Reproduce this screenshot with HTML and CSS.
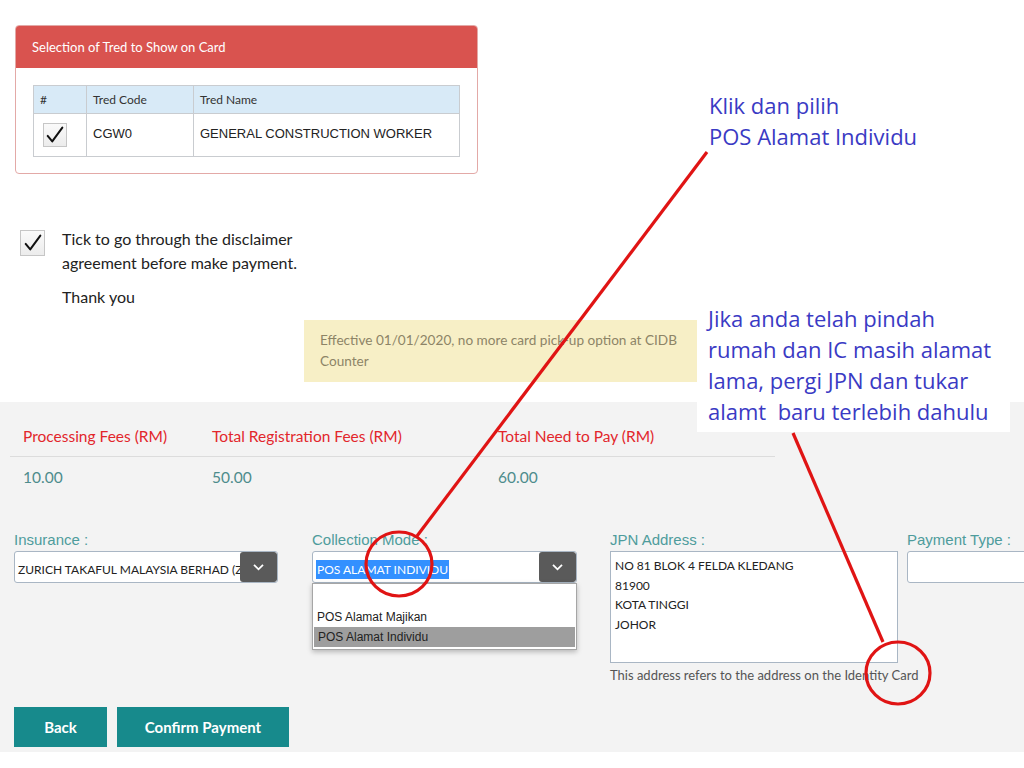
FILE: index.html
```html
<!DOCTYPE html>
<html lang="ms">
<head>
<meta charset="UTF-8" />
<title>Pembayaran Kad</title>
<link rel="stylesheet" href="styles.css">
</head>
<body>

<div class="page">

  <section class="top">
    <div class="panel">
      <div class="panel-head">Selection of Tred to Show on Card</div>
      <div class="panel-body">
        <table class="tred-table">
          <thead>
            <tr><th class="col-no">#</th><th class="col-code">Tred Code</th><th>Tred Name</th></tr>
          </thead>
          <tbody>
            <tr>
              <td class="col-no">
                <span class="tick">
                  <svg viewBox="0 0 24 24" width="22" height="22"><path d="M4 13 L9 19 L20 4" fill="none" stroke="#111" stroke-width="2.2" stroke-linecap="round" stroke-linejoin="round"/></svg>
                </span>
              </td>
              <td>CGW0</td>
              <td>GENERAL CONSTRUCTION WORKER</td>
            </tr>
          </tbody>
        </table>
      </div>
    </div>

    <div class="disclaimer">
      <span class="tick">
        <svg viewBox="0 0 24 24" width="22" height="22"><path d="M4 13 L9 19 L20 4" fill="none" stroke="#111" stroke-width="2.2" stroke-linecap="round" stroke-linejoin="round"/></svg>
      </span>
      <div class="disclaimer-text">
        <p>Tick to go through the disclaimer<br>agreement before make payment.</p>
        <p class="thanks">Thank you</p>
      </div>
    </div>

    <div class="notice">Effective 01/01/2020, no more card pick-up option at CIDB Counter</div>
  </section>

  <section class="pay">
    <div class="fees">
      <div class="fee-label">Processing Fees (RM)</div>
      <div class="fee-label">Total Registration Fees (RM)</div>
      <div class="fee-label">Total Need to Pay (RM)</div>
      <div class="fee-value">10.00</div>
      <div class="fee-value">50.00</div>
      <div class="fee-value">60.00</div>
    </div>

    <div class="form-row">
      <div class="field">
        <label>Insurance :</label>
        <div class="select w-insurance">
          <span class="select-text">ZURICH TAKAFUL MALAYSIA BERHAD (ZURICH)</span>
          <span class="select-btn">
            <svg viewBox="0 0 14 10" width="13" height="9"><path d="M2 2 L7 7 L12 2" fill="none" stroke="#fff" stroke-width="2"/></svg>
          </span>
        </div>
      </div>

      <div class="field">
        <label>Collection Mode :</label>
        <div class="select w-collect">
          <span class="select-text"><span class="picked">POS ALAMAT INDIVIDU</span></span>
          <span class="select-btn">
            <svg viewBox="0 0 14 10" width="13" height="9"><path d="M2 2 L7 7 L12 2" fill="none" stroke="#fff" stroke-width="2"/></svg>
          </span>
        </div>
        <ul class="options">
          <li>&nbsp;</li>
          <li>POS Alamat Majikan</li>
          <li class="hover">POS Alamat Individu</li>
        </ul>
      </div>

      <div class="field">
        <label>JPN Address :</label>
        <div class="address">NO 81 BLOK 4 FELDA KLEDANG<br>81900<br>KOTA TINGGI<br>JOHOR</div>
        <p class="note">This address refers to the address on the Identity Card</p>
      </div>

      <div class="field">
        <label>Payment Type :</label>
        <div class="select w-type"></div>
      </div>
    </div>

    <div class="actions">
      <button class="btn">Back</button>
      <button class="btn btn-wide">Confirm Payment</button>
    </div>
  </section>

  <!-- panduan di atas borang -->
  <div class="hint hint-pick">Klik dan pilih<br>POS Alamat Individu</div>
  <div class="hint hint-move">Jika anda telah pindah<br>rumah dan IC masih alamat<br>lama, pergi JPN dan tukar<br>alamt&nbsp; baru terlebih dahulu</div>

  <svg class="marks" width="1024" height="768" viewBox="0 0 1024 768">
    <g fill="none" stroke="#e01414" stroke-width="3.2">
      <line x1="707" y1="152" x2="417" y2="536"/>
      <ellipse cx="399" cy="564" rx="33" ry="32"/>
      <line x1="793" y1="433" x2="883" y2="642"/>
      <ellipse cx="898" cy="673" rx="32" ry="31"/>
    </g>
  </svg>

</div>

</body>
</html>
```

FILE: styles.css
```css
body {
  margin: 0;
  background: #fff;
  font-family: "Liberation Sans", Arial, sans-serif;
  color: #333;
  overflow: hidden;
}
.page {
  position: relative;
  width: 1024px;
  height: 768px;
  overflow: hidden;
}

/* bahagian atas */
.top {
  height: 402px;
  padding: 25px 0 0 15px;
  box-sizing: border-box;
}
.panel {
  width: 463px;
  border: 1px solid #e3a9a7;
  border-radius: 4px;
  box-sizing: border-box;
  overflow: hidden;
}
.panel-head {
  background: #d9534f;
  color: #fff;
  font-family: Lato, sans-serif;
  font-size: 13px;
  height: 42px;
  line-height: 42px;
  padding-left: 16px;
}
.panel-body {
  padding: 17px 17px 16px 17px;
}
.tred-table {
  width: 427px;
  border-collapse: collapse;
  font-size: 13px;
}
.tred-table th,
.tred-table td {
  border: 1px solid #c9ccd0;
  text-align: left;
  padding: 0 6px;
}
.tred-table th {
  background: #d8eaf7;
  font-family: Lato, sans-serif;
  font-weight: normal;
  font-size: 12px;
  height: 27px;
}
.tred-table td {
  height: 39px;
  color: #222;
  padding-bottom: 3px;
}
.col-no { width: 40px; }
.col-code { width: 94px; }

.tick {
  display: inline-flex;
  align-items: center;
  justify-content: center;
  width: 24px;
  height: 24px;
  border: 1px solid #c6c6c6;
  background: linear-gradient(#fafafa, #ececec);
  box-sizing: border-box;
}
.tred-table .tick { margin-left: 3px; margin-top: 4px; }

.disclaimer {
  display: flex;
  gap: 17px;
  margin: 53px 0 0 5px;
  font-family: Lato, sans-serif;
  font-size: 16px;
  color: #222;
}
.disclaimer .tick {
  width: 25px;
  height: 26px;
  margin-top: 3px;
}
.disclaimer-text p {
  margin: 0;
  line-height: 24px;
}
.disclaimer-text .thanks {
  margin-top: 10px;
}

.notice {
  margin: 11px 0 0 289px;
  width: 396px;
  height: 62px;
  box-sizing: border-box;
  padding: 10px 4px 10px 16px;
  background: #f7efc6;
  color: #8d8466;
  font-family: Lato, sans-serif;
  font-size: 13.6px;
  line-height: 21px;
}

/* bahagian bayaran */
.pay {
  background: #f3f3f3;
  height: 350px;
  padding-top: 24px;
  box-sizing: border-box;
}
.fees {
  display: grid;
  grid-template-columns: 189px 286px 290px;
  margin-left: 10px;
  width: 765px;
  font-family: Lato, sans-serif;
  font-size: 15.5px;
}
.fee-label {
  color: #e2262b;
  line-height: 20px;
  padding: 0 0 10px 13px;
  border-bottom: 1px solid #dcdcdc;
}
.fee-value {
  color: #4d8c8c;
  line-height: 20px;
  padding: 10px 0 0 13px;
}

.form-row {
  display: grid;
  grid-template-columns: 298px 298px 297px 1fr;
  padding-left: 14px;
  margin-top: 44px;
}
.field {
  position: relative;
}
.field label {
  display: block;
  color: #4e9c9c;
  font-size: 15px;
  line-height: 18px;
  height: 20px;
}
.select {
  display: flex;
  height: 32px;
  background: #fff;
  border: 1px solid #a9b6c4;
  border-radius: 3px;
  box-sizing: border-box;
  overflow: hidden;
}
.w-insurance { width: 264px; }
.w-collect { width: 265px; }
.w-type { width: 140px; }
.select-text {
  flex: 1;
  white-space: nowrap;
  overflow: hidden;
  font-family: Lato, sans-serif;
  font-size: 12px;
  line-height: 30px;
  padding: 3px 0 0 3px;
  color: #222;
}
.picked {
  background: #3390ff;
  color: #fff;
  padding: 2px 1px;
}
.select-btn {
  width: 37px;
  background: #5a5a5a;
  display: flex;
  align-items: center;
  justify-content: center;
  border-radius: 3px;
}
.options {
  position: absolute;
  left: 0;
  top: 52px;
  width: 265px;
  margin: 0;
  padding: 3px 0 2px;
  list-style: none;
  background: #fff;
  border: 1px solid #a6a6a6;
  box-sizing: border-box;
  box-shadow: 0 2px 5px rgb(0 0 0 / 0.25);
  font-size: 12px;
}
.options li {
  line-height: 20px;
  padding-left: 4px;
  color: #222;
}
.options li.hover {
  background: #9e9e9e;
  margin: 0 1px;
}

.address {
  width: 288px;
  height: 112px;
  background: #fff;
  border: 1px solid #a9b6c4;
  box-sizing: border-box;
  padding: 4px 4px;
  font-family: Lato, sans-serif;
  font-size: 12px;
  line-height: 19.5px;
  color: #222;
}
.note {
  margin: 3px 0 0;
  font-family: Lato, sans-serif;
  font-size: 13px;
  line-height: 18px;
  color: #555;
  white-space: nowrap;
}

.actions {
  display: flex;
  gap: 10px;
  padding-left: 14px;
  margin-top: 23px;
}
.btn {
  width: 93px;
  height: 40px;
  border: none;
  background: #178a8c;
  color: #fff;
  font-family: Lato, sans-serif;
  font-weight: bold;
  font-size: 15px;
}
.btn-wide { width: 172px; }

/* catatan panduan */
.hint {
  position: absolute;
  background: #fff;
  color: #3a3ac4;
  font-family: "Open Sans", sans-serif;
  font-size: 22px;
  line-height: 31px;
}
.hint-pick {
  left: 709px;
  top: 90px;
}
.hint-move {
  left: 697px;
  top: 302px;
  width: 313px;
  height: 130px;
  box-sizing: border-box;
  padding: 1px 0 0 11px;
  white-space: nowrap;
}
.marks {
  position: absolute;
  left: 0;
  top: 0;
  pointer-events: none;
}
```
